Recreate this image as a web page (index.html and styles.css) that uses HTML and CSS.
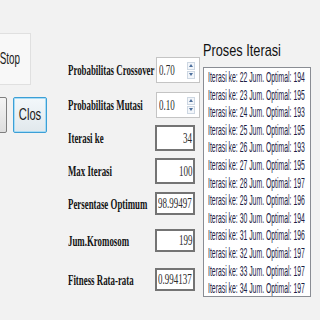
FILE: index.html
```html
<!DOCTYPE html>
<html>
<head>
  <title>Algoritma Genetika</title>
  <link rel="stylesheet" href="styles.css">
</head>
<body>
  <div class="window">
    <div class="side">
      <div class="stop"><span class="txt">Stop</span></div>
      <div class="btn-row">
        <div class="btn cut"></div>
        <div class="btn close"><span class="txt">Clos</span></div>
      </div>
    </div>

    <div class="params">
      <div class="row">
        <span class="label"><span>Probabilitas Crossover</span></span>
        <div class="spin">
          <span class="val">0.70</span>
          <div class="arrows"><div class="arr up"></div><div class="arr down"></div></div>
        </div>
      </div>
      <div class="row r2">
        <span class="label"><span>Probabilitas Mutasi</span></span>
        <div class="spin">
          <span class="val">0.10</span>
          <div class="arrows"><div class="arr up"></div><div class="arr down"></div></div>
        </div>
      </div>
      <div class="row r3">
        <span class="label"><span>Iterasi ke</span></span>
        <div class="box right"><span class="val">34</span></div>
      </div>
      <div class="row r4">
        <span class="label"><span>Max Iterasi</span></span>
        <div class="box right"><span class="val">100</span></div>
      </div>
      <div class="row r5 small">
        <span class="label"><span>Persentase Optimum</span></span>
        <div class="box"><span class="val">98.99497</span></div>
      </div>
      <div class="row r6 small">
        <span class="label"><span>Jum.Kromosom</span></span>
        <div class="box right"><span class="val">199</span></div>
      </div>
      <div class="row r7 small">
        <span class="label"><span>Fitness Rata-rata</span></span>
        <div class="box"><span class="val">0.994137</span></div>
      </div>
    </div>

    <div class="log">
      <div class="log-title"><span>Proses Iterasi</span></div>
      <div class="list">
        <div class="item"><span>Iterasi ke: 22 Jum. Optimal: 194</span></div>
        <div class="item"><span>Iterasi ke: 23 Jum. Optimal: 195</span></div>
        <div class="item"><span>Iterasi ke: 24 Jum. Optimal: 193</span></div>
        <div class="item"><span>Iterasi ke: 25 Jum. Optimal: 195</span></div>
        <div class="item"><span>Iterasi ke: 26 Jum. Optimal: 193</span></div>
        <div class="item"><span>Iterasi ke: 27 Jum. Optimal: 195</span></div>
        <div class="item"><span>Iterasi ke: 28 Jum. Optimal: 197</span></div>
        <div class="item"><span>Iterasi ke: 29 Jum. Optimal: 196</span></div>
        <div class="item"><span>Iterasi ke: 30 Jum. Optimal: 194</span></div>
        <div class="item"><span>Iterasi ke: 31 Jum. Optimal: 196</span></div>
        <div class="item"><span>Iterasi ke: 32 Jum. Optimal: 197</span></div>
        <div class="item"><span>Iterasi ke: 33 Jum. Optimal: 197</span></div>
        <div class="item"><span>Iterasi ke: 34 Jum. Optimal: 197</span></div>
      </div>
    </div>
  </div>
</body>
</html>
```

FILE: styles.css
```css
body {
  margin: 0;
  background-color: #f2f2f2;
  font-family: "Liberation Sans", Arial, sans-serif;
}

.window {
  display: flex;
  height: 320px;
  overflow: hidden;
}

/* left buttons */
.side {
  width: 68px;
  flex-shrink: 0;
  padding-top: 33px;
}

.stop {
  width: 51px;
  height: 52px;
  margin-left: -20px;
  box-sizing: border-box;
  background-color: #f8f8f8;
  border: 1px solid #e0e0e0;
  display: flex;
  align-items: center;
  justify-content: flex-end;
  padding-right: 10px;
}

.stop .txt {
  display: inline-block;
  font-size: 17px;
  color: #1c1c1c;
  transform: scaleX(0.58);
  transform-origin: right center;
}

.btn-row {
  display: flex;
  gap: 6px;
  margin-top: 12px;
}

.btn {
  height: 36px;
  box-sizing: border-box;
  border: 1px solid #7f7f7f;
  border-radius: 2px;
  background: linear-gradient(#f4f4f4, #dedede);
  display: flex;
  align-items: center;
  justify-content: center;
}

.cut {
  width: 20px;
  margin-left: -13px;
}

.close {
  width: 34px;
  border-color: #3c9fd6;
  box-shadow: inset 0 0 0 1px #a8dcf5;
  background: linear-gradient(#f3f8fb, #e1e8ec);
}

.close .txt {
  display: inline-block;
  font-size: 17px;
  color: #1c1c1c;
  transform: scaleX(0.66);
}

/* parameter rows */
.params {
  width: 135px;
  flex-shrink: 0;
  padding-top: 57px;
}

.row {
  display: flex;
  align-items: center;
  height: 26px;
}

.row.small {
  height: 23px;
}

.r2 { margin-top: 9px; }
.r3 { margin-top: 7px; }
.r4 { margin-top: 7px; }
.r5 { margin-top: 8px; }
.r6 { margin-top: 14px; }
.r7 { margin-top: 16px; }

.label {
  width: 87px;
  flex-shrink: 0;
  white-space: nowrap;
}

.label span {
  display: inline-block;
  font-family: "Liberation Serif", "Times New Roman", serif;
  font-weight: bold;
  font-size: 15px;
  color: #141414;
  transform: scaleX(0.59);
  transform-origin: left center;
}

.val {
  display: inline-block;
  font-family: "Liberation Serif", "Times New Roman", serif;
  font-size: 15px;
  color: #2b2b2b;
  white-space: nowrap;
  transform: scaleX(0.6);
  transform-origin: left center;
}

.spin {
  width: 44px;
  height: 26px;
  margin-left: 1px;
  box-sizing: border-box;
  background-color: #fff;
  border: 1px solid #c4c4c4;
  display: flex;
  align-items: center;
  justify-content: space-between;
  padding: 0 4px 0 2px;
}

.arrows {
  display: flex;
  flex-direction: column;
  gap: 1px;
}

.arr {
  width: 8px;
  height: 8px;
  box-sizing: border-box;
  border: 1px solid #cdd7e2;
  background-color: #f3f6fa;
  display: flex;
  align-items: center;
  justify-content: center;
}

.arr::after {
  content: "";
  border-left: 2px solid transparent;
  border-right: 2px solid transparent;
}

.up::after {
  border-bottom: 3px solid #4d6f9c;
}

.down::after {
  border-top: 3px solid #4d6f9c;
}

.box {
  width: 40px;
  height: 100%;
  box-sizing: border-box;
  background-color: #fff;
  border: 2px solid #747474;
  display: flex;
  align-items: center;
  padding: 0 1px;
  overflow: hidden;
}

.box.right {
  justify-content: flex-end;
}

.box.right .val {
  transform-origin: right center;
}

/* iteration log */
.log {
  width: 108px;
  flex-shrink: 0;
  padding-top: 43px;
}

.log-title {
  height: 16px;
  line-height: 16px;
  white-space: nowrap;
}

.log-title span {
  display: inline-block;
  font-size: 17px;
  color: #111;
  transform: scaleX(0.75);
  transform-origin: left center;
}

.list {
  margin-top: 8px;
  height: 230px;
  box-sizing: border-box;
  background-color: #fff;
  border: 1px solid #8a8d94;
  padding-left: 4px;
  overflow: hidden;
}

.item {
  height: 17.6px;
  line-height: 17.6px;
  white-space: nowrap;
}

.item span {
  display: inline-block;
  font-size: 14px;
  color: #1c1c44;
  transform: scaleX(0.49);
  transform-origin: left center;
}
```
